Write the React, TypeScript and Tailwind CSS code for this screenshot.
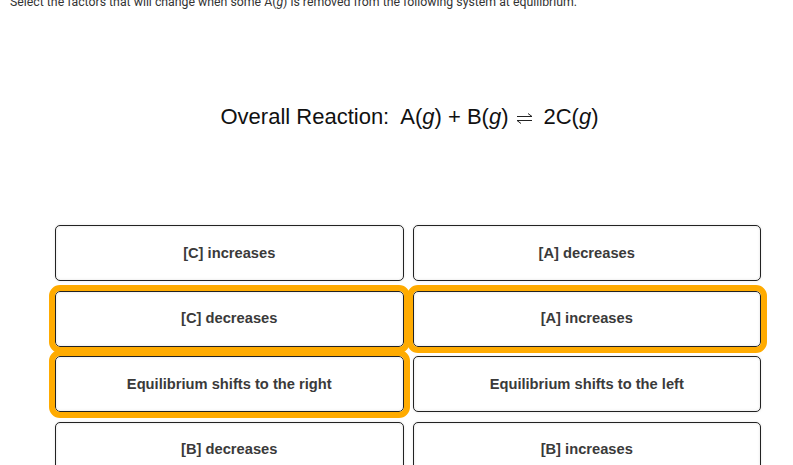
import React from "react";

interface Choice {
  label: string;
  selected: boolean;
}

const choices: Choice[] = [
  { label: "[C] increases", selected: false },
  { label: "[A] decreases", selected: false },
  { label: "[C] decreases", selected: true },
  { label: "[A] increases", selected: true },
  { label: "Equilibrium shifts to the right", selected: true },
  { label: "Equilibrium shifts to the left", selected: false },
  { label: "[B] decreases", selected: false },
  { label: "[B] increases", selected: false },
];

// equilibrium harpoons
function Harpoons() {
  return (
    <svg width="17" height="12" viewBox="0 0 17 12" className="ml-[8px] mr-[10px] mt-[3px]">
      <path d="M1 4.5 H16 L12 1.5" fill="none" stroke="#222" strokeWidth="1" />
      <path d="M16 8.5 H1 L5 11.5" fill="none" stroke="#222" strokeWidth="1" />
    </svg>
  );
}

export default function App() {
  return (
    <div className="min-h-screen bg-white text-[#333]">
      <p
        className="-mt-[6px] pl-[10px] text-[12.3px] leading-[17px] text-[#333]"
        style={{ fontFamily: "Roboto, Arial, sans-serif" }}
      >
        Select the factors that will change when some A(<i>g</i>) is removed from the following system at equilibrium.
      </p>

      <div
        className="mt-[89px] flex items-center justify-center pl-[26px] text-[22px] text-[#111]"
        style={{ fontFamily: '"Liberation Sans", Arial, sans-serif' }}
      >
        <span className="whitespace-pre">Overall Reaction:  A(<i>g</i>) + B(<i>g</i>)</span>
        <Harpoons />
        <span>
          2C(<i>g</i>)
        </span>
      </div>

      <div className="mt-[92px] ml-[55px] grid w-[706px] grid-cols-2 gap-x-[9px] gap-y-[9.5px]">
        {choices.map((c) => (
          <button
            key={c.label}
            className={
              "flex h-[56px] items-center justify-center rounded-[5px] border border-[#222] bg-white text-[14.7px] font-bold text-[#3a3a3a] shadow-[inset_0_0_3px_rgba(0,0,0,0.12),0_0_3px_rgba(0,0,0,0.1)] " +
              (c.selected ? "outline-[6px] outline-solid outline-[#ffab00]" : "")
            }
            style={{ fontFamily: '"Liberation Sans", Arial, sans-serif' }}
          >
            {c.label}
          </button>
        ))}
      </div>
    </div>
  );
}
